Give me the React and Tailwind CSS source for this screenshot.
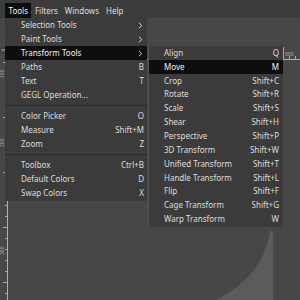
import React from "react";

const mainItems = [
  { label: "Selection Tools", arrow: true },
  { label: "Paint Tools", arrow: true },
  { label: "Transform Tools", arrow: true, active: true },
  { label: "Paths", sc: "B" },
  { label: "Text", sc: "T" },
  { label: "GEGL Operation..." },
  "sep",
  { label: "Color Picker", sc: "O" },
  { label: "Measure", sc: "Shift+M" },
  { label: "Zoom", sc: "Z" },
  "sep",
  { label: "Toolbox", sc: "Ctrl+B" },
  { label: "Default Colors", sc: "D" },
  { label: "Swap Colors", sc: "X" },
];

const subItems = [
  { label: "Align", sc: "Q" },
  { label: "Move", sc: "M", active: true },
  { label: "Crop", sc: "Shift+C" },
  { label: "Rotate", sc: "Shift+R" },
  { label: "Scale", sc: "Shift+S" },
  { label: "Shear", sc: "Shift+H" },
  { label: "Perspective", sc: "Shift+P" },
  { label: "3D Transform", sc: "Shift+W" },
  { label: "Unified Transform", sc: "Shift+T" },
  { label: "Handle Transform", sc: "Shift+L" },
  { label: "Flip", sc: "Shift+F" },
  { label: "Cage Transform", sc: "Shift+G" },
  { label: "Warp Transform", sc: "W" },
];

function Chevron() {
  return (
    <svg width="5" height="7" viewBox="0 0 5 7" className="mr-[1px]">
      <polyline points="1,0.8 3.8,3.5 1,6.2" fill="none" stroke="#d8d8d8" strokeWidth="1" />
    </svg>
  );
}

function Rulers() {
  const vt = [];
  for (let y = 62, i = 0; y < 300; y += 11, i++) {
    const long = i % 5 === 0;
    vt.push(<line key={"v" + y} x1={long ? 3 : 5} x2="7.5" y1={y + 0.5} y2={y + 0.5} stroke="#a8a8a8" strokeWidth="1" />);
  }
  const ht = [];
  for (let x = 283, i = 0; x < 300; x += 6, i++) {
    ht.push(<line key={"h" + x} x1={x + 0.5} x2={x + 0.5} y1={i === 0 ? 47 : 56} y2="60" stroke="#a8a8a8" strokeWidth="1" />);
  }
  return (
    <svg width="300" height="300" viewBox="0 0 300 300" className="absolute left-0 top-0">
      <line x1="7.5" x2="7.5" y1="60" y2="300" stroke="#b0b0b0" strokeWidth="1" />
      {vt}
      <line x1="8" x2="300" y1="59.5" y2="59.5" stroke="#b0b0b0" strokeWidth="1" />
      {ht}
      <text x="285" y="56" fontSize="5" fill="#b8b8b8" fontFamily="Noto Sans, sans-serif">500</text>
      <g fill="#a8a8a8" fontSize="5" fontFamily="Noto Sans, sans-serif">
        <text transform="translate(4,78) rotate(-90)">100</text>
        <text transform="translate(4,147) rotate(-90)">200</text>
        <text transform="translate(4,255) rotate(-90)">300</text>
      </g>
      <rect x="0" y="47" width="7" height="6" fill="#3d3d3d" />
      <path d="M1.5 49.5h4M1.5 51h4" stroke="#9a9a9a" strokeWidth="0.8" />
      <path d="M270 231 C266 262 246 285 216 300 L273 300 L273 231 Z" fill="#5b5b5b" />
    </svg>
  );
}

export default function App() {
  return (
    <div className="relative w-[300px] h-[300px] overflow-hidden bg-[#474747] font-['Noto_Sans',sans-serif] text-[8px] text-[#dedede]">
      <Rulers />
      <div className="relative flex h-[18px] bg-[#3c3c3c] pt-[3px] pl-[5px]">
        {["Tools", "Filters", "Windows", "Help"].map((t, i) => (
          <span
            key={t}
            className={
              "h-[15px] leading-[15px] px-[3.5px] " + (i === 0 ? "bg-[#0e0e0e] text-[#f0f0f0]" : "")
            }
          >
            {t}
          </span>
        ))}
      </div>

      <div className="absolute left-[5px] top-[18px] w-[142px] bg-[#3b3b3b] pb-[1px]">
        {mainItems.map((it, i) =>
          it === "sep" ? (
            <div key={"s" + i} className="my-[3px] h-px bg-[#2a2a2a]" />
          ) : (
            <div
              key={it.label}
              className={
                "flex h-[14px] items-center justify-between pl-[16px] pr-[3px] " +
                (it.active ? "bg-[#0e0e0e] text-[#f2f2f2]" : "")
              }
            >
              <span>{it.label}</span>
              {it.arrow ? <Chevron /> : <span>{it.sc}</span>}
            </div>
          )
        )}
      </div>

      <div className="absolute left-[148px] top-[46px] w-[135px] bg-[#3b3b3b] border-l border-[#555555] pb-[1.5px]">
        {subItems.map((it) => (
          <div
            key={it.label}
            className={
              "flex h-[13.85px] items-center justify-between pl-[15px] pr-[4px] " +
              (it.active ? "bg-[#0e0e0e] text-[#f2f2f2]" : "")
            }
          >
            <span>{it.label}</span>
            <span>{it.sc}</span>
          </div>
        ))}
      </div>
    </div>
  );
}
